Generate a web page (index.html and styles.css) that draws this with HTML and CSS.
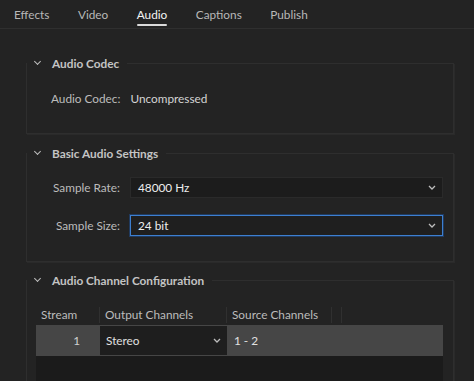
FILE: index.html
```html
<!DOCTYPE html>
<html>
<head>
<meta charset="utf-8">
<link rel="stylesheet" href="styles.css">
</head>
<body>
<div class="app">
  <nav class="tabs">
    <span class="tab">Effects</span>
    <span class="tab">Video</span>
    <span class="tab active">Audio</span>
    <span class="tab">Captions</span>
    <span class="tab">Publish</span>
  </nav>
  <div class="content">
    <section class="group g1">
      <header class="ghead"><span class="lchev"></span><span class="ltext">Audio Codec</span></header>
      <div class="row"><span class="label">Audio Codec:</span><span class="value">Uncompressed</span></div>
    </section>
    <section class="group g2">
      <header class="ghead"><span class="lchev"></span><span class="ltext">Basic Audio Settings</span></header>
      <div class="gbody">
        <div class="field"><span class="label">Sample Rate:</span><div class="select"><span>48000 Hz</span><svg class="chev" viewBox="0 0 8 5"><path d="M1 1l3 3 3-3"/></svg></div></div>
        <div class="field"><span class="label">Sample Size:</span><div class="select focus"><span>24 bit</span><svg class="chev" viewBox="0 0 8 5"><path d="M1 1l3 3 3-3"/></svg></div></div>
      </div>
    </section>
    <section class="group g3">
      <header class="ghead"><span class="lchev"></span><span class="ltext">Audio Channel Configuration</span></header>
      <div class="table">
        <div class="thead">
          <span class="th c1">Stream</span>
          <span class="th c2">Output Channels</span>
          <span class="th c3">Source Channels</span>
          <span class="th c4"></span>
        </div>
        <div class="trow">
          <span class="td c1 num">1</span>
          <div class="td c2 cellsel"><span>Stereo</span><svg class="chev" viewBox="0 0 8 5"><path d="M1 1l3 3 3-3"/></svg></div>
          <span class="td c3">1 - 2</span>
        </div>
        <div class="tbody"></div>
      </div>
    </section>
  </div>
</div>
</body>
</html>
```
FILE: styles.css
```css
* { box-sizing: border-box; }
html, body { margin: 0; padding: 0; }
body {
  background: #232323;
  font-family: Lato, "Open Sans", sans-serif;
  font-size: 11.8px;
  color: #c8c8c8;
  width: 474px;
  height: 381px;
  overflow: hidden;
}
.app { display: flex; flex-direction: column; }
.tabs {
  display: flex;
  height: 29px;
  border-bottom: 1px solid #2f2f2f;
  padding-left: 14px;
  gap: 28.5px;
}
.tab {
  color: #b8b8b8;
  line-height: 29px;
  height: 28px;
}
.tab.active {
  color: #f4f4f4;
  position: relative;
}
.tab.active::after {
  content: "";
  position: absolute;
  left: 0; right: 0; bottom: 2px;
  height: 2px;
  background: #dadada;
  border-radius: 1px;
}
.content {
  padding: 34px 20px 0 26px;
  display: flex;
  flex-direction: column;
}
.group {
  border: 1px solid #2e2e2e;
  box-shadow: 1px 1px 0 #2a2a2a;
  display: flex;
  flex-direction: column;
}
.ghead {
  display: flex;
  align-items: center;
  align-self: flex-start;
  height: 14px;
  margin: -8px 0 0 0;
  padding: 0 8px 0 6px;
  background: #232323;
  font-weight: 700;
  color: #c4c4c4;
  white-space: nowrap;
}
.lchev {
  width: 5px;
  height: 5px;
  border-right: 1.4px solid #bdbdbd;
  border-bottom: 1.4px solid #bdbdbd;
  transform: rotate(45deg);
  margin: -3px 12px 0 2px;
  flex: none;
}
.chev {
  width: 8px;
  height: 5px;
  fill: none;
  stroke: #bdbdbd;
  stroke-width: 1.3;
  flex: none;
}
.g1 { height: 71px; }
.g1 .row {
  padding: 21px 0 0 24px;
  display: flex;
  gap: 10px;
}
.label { color: #bcbcbc; }
.value { color: #d4d4d4; }
.g2 { margin-top: 19px; height: 109px; }
.gbody { padding: 17px 10px 0 0; }
.field {
  display: flex;
  align-items: center;
  margin-bottom: 17px;
}
.field .label {
  width: 103px;
  text-align: right;
  padding-right: 10px;
}
.select {
  flex: 1;
  height: 21px;
  background: #1c1c1c;
  border: 1px solid #2a2a2a;
  display: flex;
  align-items: center;
  justify-content: space-between;
  padding: 0 6px 0 7px;
  color: #eeeeee;
}
.select.focus {
  border: 1px solid #3d7fd0;
  box-shadow: 0 0 0 1px #203a5e;
  background: #1f1f1f;
}
.g3 { margin-top: 18px; height: 114px; }
.table { display: flex; flex-direction: column; padding: 18px 10px 0 9px; }
.thead { display: flex; height: 20px; align-items: center; }
.th {
  color: #bcbcbc;
  height: 16px;
  line-height: 16px;
  padding-left: 5px;
  border-right: 1px solid #303030;
}
.c1 { width: 64px; }
.c2 { width: 127px; }
.c3 { width: 105px; }
.c4 { width: 10px; }
.trow {
  display: flex;
  height: 31px;
  background: #464646;
  align-items: stretch;
}
.td {
  display: flex;
  align-items: center;
  color: #e0e0e0;
  padding-left: 7px;
}
.td.num { justify-content: flex-end; padding-right: 20px; color: #d0d0d0; }
.cellsel {
  background: #1e1e1e;
  justify-content: space-between;
  padding: 0 6px 0 6px;
  margin: 1px 0;
}
.tbody { height: 40px; background: #1b1b1b; }
```
